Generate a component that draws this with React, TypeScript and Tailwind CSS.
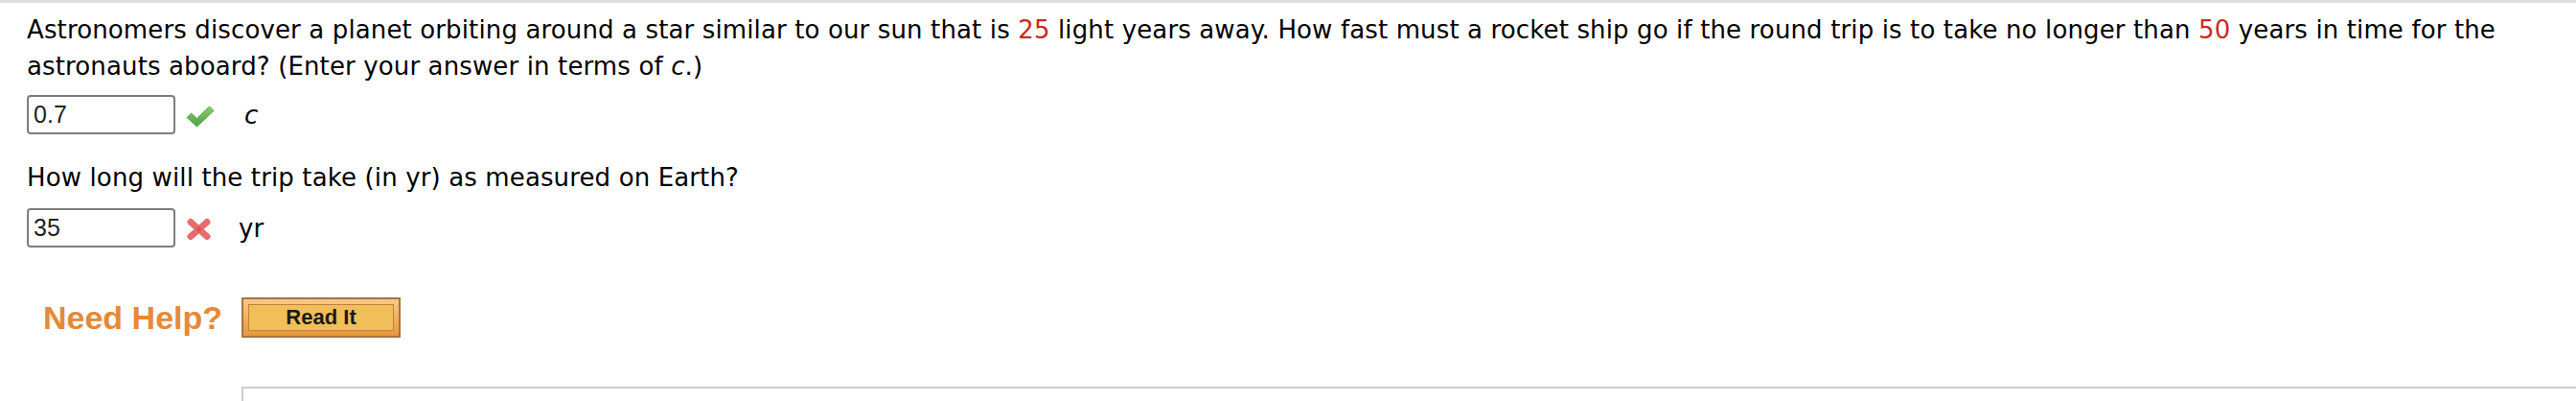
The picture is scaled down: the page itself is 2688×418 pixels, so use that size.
import React from 'react'

const CheckMark = () => (
    <svg width="30" height="23" viewBox="0 0 30 23" className="ml-[11px] mt-[4px]">
        <defs>
            <linearGradient id="chk" x1="0" y1="0" x2="0" y2="1">
                <stop offset="0" stopColor="#8ccf6e" />
                <stop offset="1" stopColor="#4f9e45" />
            </linearGradient>
        </defs>
        <path d="M1 12.5 L5.5 8 L11.5 13.5 L24.5 1 L29 5.5 L11.5 22 Z" fill="url(#chk)" stroke="#5aa84c" strokeWidth="1" strokeLinejoin="round" />
    </svg>
)

const CrossMark = () => (
    <svg width="27" height="24" viewBox="0 0 27 24" className="ml-[11px] mt-[2px]">
        <g strokeLinecap="round">
            <line x1="5" y1="4.5" x2="22" y2="19.5" stroke="#e56d6d" strokeWidth="7" />
            <line x1="22" y1="4.5" x2="5" y2="19.5" stroke="#e56d6d" strokeWidth="7" />
            <circle cx="13.5" cy="12" r="2.5" fill="#d45555" />
        </g>
    </svg>
)

const AnswerBox = ({ value }: { value: string }) => (
    <input
        readOnly
        value={value}
        className="w-[155px] h-[41px] border-2 border-[#7d7d7d] rounded-[4px] pl-[5px] font-['Liberation_Sans',Arial,sans-serif] text-[25px] text-[#222] outline-none bg-white"
    />
)

export default function App() {
    return (
        <div className="w-[2688px] h-[418px] bg-white overflow-hidden">
            <div className="h-[3px] bg-[#dedede]" />
            <div className="pl-[28px] pr-[40px] pt-[9px] font-['DejaVu_Sans',Verdana,sans-serif] text-[26px] leading-[38px] tracking-[0.13px] text-black">
                <p>
                    Astronomers discover a planet orbiting around a star similar to our sun that is <span className="text-[#d0281e]">25</span> light years away. How fast must a rocket ship go if the round trip is to take no longer than <span className="text-[#d0281e]">50</span> years in time for the astronauts aboard? (Enter your answer in terms of <i>c</i>.)
                </p>
                <div className="mt-[11px] flex items-center h-[41px]">
                    <AnswerBox value="0.7" />
                    <CheckMark />
                    <span className="ml-[31px] italic">c</span>
                </div>
                <p className="mt-[26px]">How long will the trip take (in yr) as measured on Earth?</p>
                <div className="mt-[13px] flex items-center h-[41px]">
                    <AnswerBox value="35" />
                    <CrossMark />
                    <span className="ml-[28px]">yr</span>
                </div>
                <div className="mt-[52px] flex items-center h-[42px] pl-[17px]">
                    <span className="font-['Liberation_Sans',Arial,sans-serif] font-bold text-[34px] leading-none tracking-normal text-[#e58a36]">Need Help?</span>
                    <button className="ml-[20px] w-[166px] h-[42px] border-2 border-[#a8753a] bg-gradient-to-b from-[#f7c98a] to-[#e8963c] p-[5px]">
                        <span className="flex items-center justify-center w-full h-full border-[1.5px] border-[#c2823a] bg-[#f0bf5a] font-['Liberation_Sans',Arial,sans-serif] font-bold text-[22px] tracking-normal text-[#1a1a1a] leading-none">
                            Read It
                        </span>
                    </button>
                </div>
            </div>
            <div className="mt-[51px] ml-[252px] h-[40px] border-t-2 border-l-2 border-[#cccccc]" />
        </div>
    )
}
